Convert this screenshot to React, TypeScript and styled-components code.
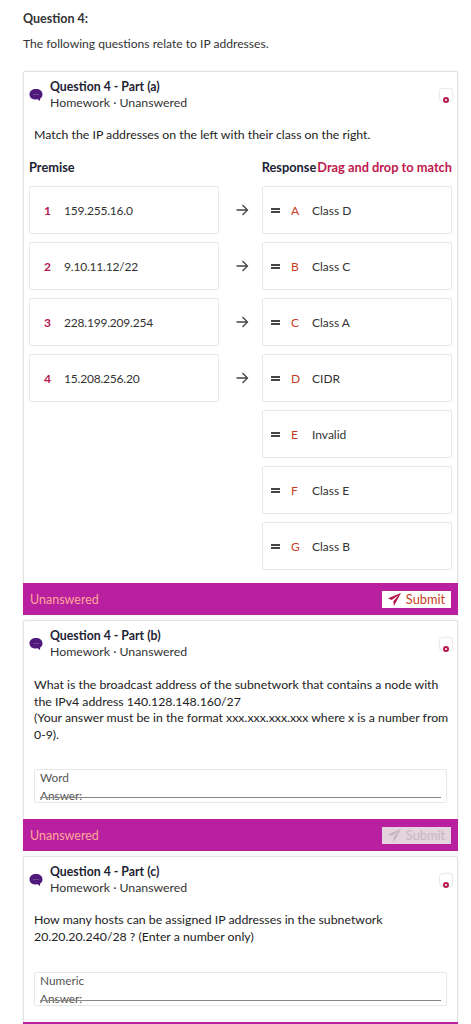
import React from "react";
import styled, { createGlobalStyle } from "styled-components";

const Global = createGlobalStyle`
  html, body { margin: 0; padding: 0; background: #fff; overflow: hidden; height: 1024px; }
  body { font-family: "Lato", "Noto Sans", sans-serif; color: #1c1c28; }
`;

const Page = styled.div`
  padding: 11px 13px 0 23px;
  height: 1024px;
  box-sizing: border-box;
  overflow: hidden;
`;
const PageTitle = styled.div`
  font-size: 12.5px; font-weight: 700; line-height: 15px; color: #333;
`;
const Intro = styled.div`
  font-size: 12.1px; line-height: 16px; margin: 10px 0 19px; color: #333;
`;
const Card = styled.section`
  border: 1px solid #e3e3e3;
  border-radius: 2px;
  box-shadow: 0 0 2px rgba(0,0,0,.12);
  background: #fff;
  margin-bottom: 5px;
`;
const Header = styled.header`
  display: flex; align-items: center; padding: 6px 5px 0 5px; height: 33px;
`;
const Titles = styled.div`
  margin-left: 7px; flex: 1; font-size: 12.3px; line-height: 16px;
`;
const QTitle = styled.div` font-weight: 700; color: #1d2233; `;
const QSub = styled.div` color: #333; `;
const Flag = styled.div`
  width: 12px; height: 12px; background: #fff; border-radius: 2px;
  box-shadow: 0 0 2px rgba(0,0,0,.3); position: relative; margin-top: 1px;
  &::after { content: ""; position: absolute; left: 3px; bottom: -2px; width: 2px; height: 2px; border: 2px solid #b5174f; border-radius: 50%; }
`;
const Body = styled.div<{ $top: number; $bottom: number }>`
  padding: ${p => p.$top}px 6px ${p => p.$bottom}px 10px;
`;
const Text = styled.p`
  margin: 0; font-size: 12.3px; line-height: 16.5px; color: #222;
`;
const Heads = styled.div`
  display: flex; margin: 15.5px 0 0; padding: 0 5px; font-size: 12.8px; font-weight: 700; line-height: 16px; color: #1d2233; white-space: nowrap;
`;
const HeadLeft = styled.div` width: 233px; `;
const Hint = styled.span` color: #c0174d; margin-left: 1px; `;
const Grid = styled.div`
  display: grid; grid-template-columns: 190px 43px 190px; grid-auto-rows: 48px; row-gap: 8px;
  padding: 11px 5px 13px;
`;
const Box = styled.div`
  border: 1px solid #e8e8e8; border-radius: 2px; display: flex; align-items: center; font-size: 12px; color: #333; box-sizing: border-box;
`;
const Num = styled.span` font-weight: 700; color: #b5174f; width: 26px; padding-left: 14px; box-sizing: border-box; margin-right: 8px; `;
const Ip = styled.span` letter-spacing: -0.2px; `;
const Arrow = styled.div` display: flex; align-items: center; justify-content: flex-end; padding-right: 13px; `;
const Handle = styled.span` width: 9px; height: 5px; border-top: 2px solid #444; border-bottom: 2px solid #444; margin-left: 8px; box-sizing: border-box; `;
const Letter = styled.span` color: #c8401f; width: 21px; margin-left: 11px; `;
const Bar = styled.div`
  background: #b8209f; height: 32px; display: flex; align-items: center; justify-content: space-between; padding: 0 7px;
  color: #ffa79a; font-size: 12.5px; margin: 0 -1px -1px;
`;
const Submit = styled.div<{ $off?: boolean }>`
  background: ${p => p.$off ? "#e3d4dd" : "#fff"};
  color: ${p => p.$off ? "#c6b8bf" : "#c8401f"};
  width: 69px; height: 17px; display: flex; align-items: center; justify-content: center; gap: 5px; font-size: 12.8px;
`;
const Field = styled.div<{ $top: number; $height: number }>`
  margin: ${p => p.$top}px 4px 0 0; border: 1px solid #e8e8e8; border-radius: 2px; height: ${p => p.$height}px; position: relative; padding: 0 5px; font-size: 11.8px; line-height: 18px; color: #555;
  &::after { content: ""; position: absolute; left: 5px; right: 5px; top: 27px; border-top: 1px solid #8a8580; }
`;
const FieldText = styled.div` margin-top: -1px; `;
const Icon = () => (
  <svg width="14" height="14" viewBox="0 0 14 14"><path d="M7 1C3.3 1 .5 3 .5 6.4c0 3 2.6 5 6.5 5 .6 0 1.1 0 1.6-.1L11 13l.2-2.6c1.500-.8 2.300-2.200 2.300-4C13.500 3 10.700 1 7 1z" fill="#4f1a7c"/><circle cx="5" cy="6.500" r=".5" fill="#a98cc0"/><circle cx="7" cy="6.500" r=".5" fill="#a98cc0"/><circle cx="9" cy="6.500" r=".5" fill="#a98cc0"/></svg>
);
const ArrowIcon = () => (
  <svg width="13" height="12" viewBox="0 0 13 12" fill="none" stroke="#444" strokeWidth="1.3"><path d="M0.500 6h11M6.500 1l5 5-5 5"/></svg>
);
const Plane = ({ c }: { c: string }) => (
  <svg width="13" height="13" viewBox="0 0 11 11"><path d="M11 0 0 4.500l3 1.500L9 2 4.500 7l.500 4z" fill={c}/></svg>
);

const left = ["159.255.16.0", "9.10.11.12/22", "228.199.209.254", "15.208.256.20"];
const right = ["Class D", "Class C", "Class A", "CIDR", "Invalid", "Class E", "Class B"];

const Head = ({ part }: { part: string }) => (
  <Header>
    <Icon />
    <Titles>
      <QTitle>Question 4 - Part ({part})</QTitle>
      <QSub>Homework · Unanswered</QSub>
    </Titles>
    <Flag />
  </Header>
);

export default function App() {
  return (
    <Page>
      <Global />
      <PageTitle>Question 4:</PageTitle>
      <Intro>The following questions relate to IP addresses.</Intro>
      <Card>
        <Head part="a" />
        <Body $top={16} $bottom={0}>
          <Text>Match the IP addresses on the left with their class on the right.</Text>
        </Body>
        <Heads>
          <HeadLeft>Premise</HeadLeft>
          <span>Response<Hint>Drag and drop to match</Hint></span>
        </Heads>
        <Grid>
          {right.map((r, i) => (
            <React.Fragment key={r}>
              {left[i] ? <Box><Num>{i + 1}</Num><Ip>{left[i]}</Ip></Box> : <div />}
              {left[i] ? <Arrow><ArrowIcon /></Arrow> : <div />}
              <Box><Handle /><Letter>{"ABCDEFG"[i]}</Letter>{r}</Box>
            </React.Fragment>
          ))}
        </Grid>
        <Bar>Unanswered<Submit><Plane c="#b5174f" />Submit</Submit></Bar>
      </Card>
      <Card>
        <Head part="b" />
        <Body $top={17} $bottom={16}>
          <Text>What is the broadcast address of the subnetwork that contains a node with the IPv4 address 140.128.148.160/27<br />(Your answer must be in the format xxx.xxx.xxx.xxx where x is a number from 0-9).</Text>
          <Field $top={26} $height={32}><FieldText>Word<br />Answer:</FieldText></Field>
        </Body>
        <Bar>Unanswered<Submit $off><Plane c="#c6b8bf" />Submit</Submit></Bar>
      </Card>
      <Card>
        <Head part="c" />
        <Body $top={16} $bottom={16}>
          <Text>How many hosts can be assigned IP addresses in the subnetwork<br />20.20.20.240/28 ? (Enter a number only)</Text>
          <Field $top={27} $height={32}><FieldText>Numeric<br />Answer:</FieldText></Field>
        </Body>
        <Bar />
      </Card>
    </Page>
  );
}
